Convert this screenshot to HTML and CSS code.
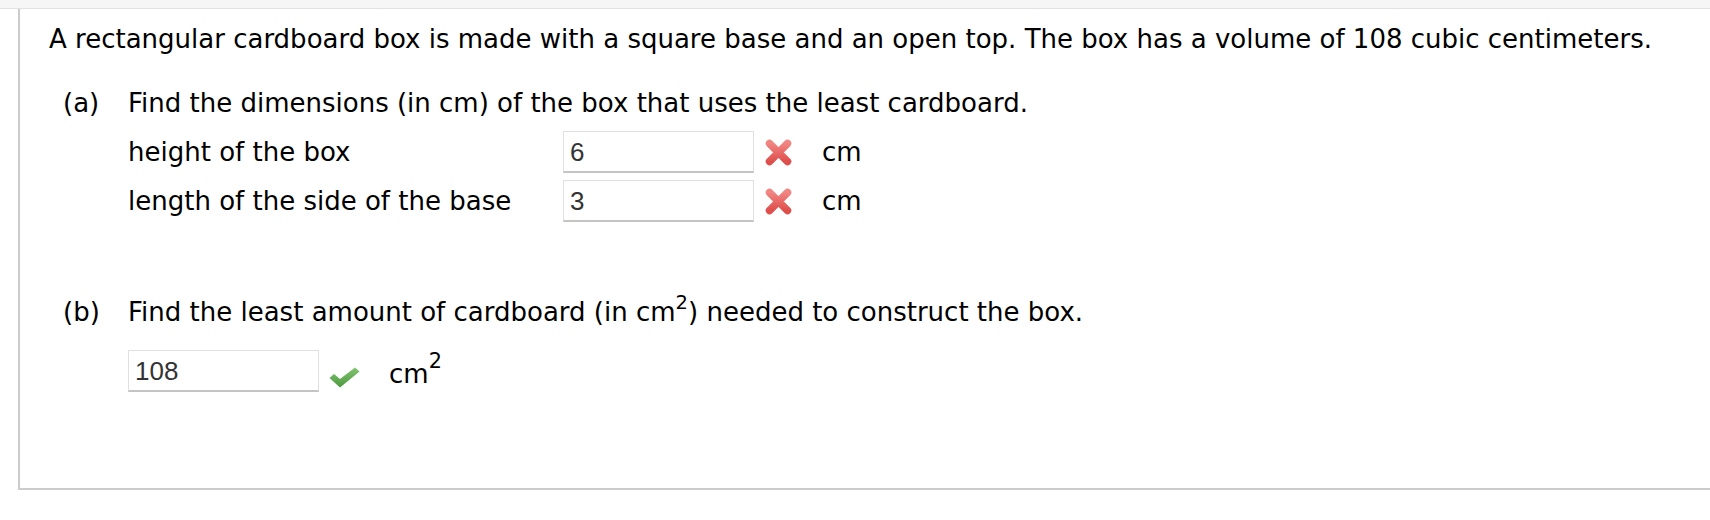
FILE: index.html
```html
<!DOCTYPE html>
<html>
<head>
<meta charset="utf-8">
<link rel="stylesheet" href="styles.css">
</head>
<body>
<div class="topband"></div>
<div class="frame">
  <p class="intro">A rectangular cardboard box is made with a square base and an open top. The box has a volume of 108 cubic centimeters.</p>

  <div class="part part-a">
    <div class="part-label">(a)</div>
    <div class="part-body">
      <div class="question">Find the dimensions (in cm) of the box that uses the least cardboard.</div>
      <div class="answers">
        <div class="answer-row">
          <div class="field-label">height of the box</div>
          <div class="input">6</div>
          <svg class="mark cross" viewBox="0 0 27 27" width="27" height="27">
            <defs>
              <linearGradient id="xg" x1="0" y1="0" x2="0" y2="1">
                <stop offset="0" stop-color="#f08582"/>
                <stop offset="1" stop-color="#de4f4c"/>
              </linearGradient>
            </defs>
            <path d="M4.5 4.5 L22.5 22.5 M22.5 4.5 L4.5 22.5" stroke="url(#xg)" stroke-width="7.5" stroke-linecap="round"/>
          </svg>
          <div class="unit">cm</div>
        </div>
        <div class="answer-row">
          <div class="field-label">length of the side of the base</div>
          <div class="input">3</div>
          <svg class="mark cross" viewBox="0 0 27 27" width="27" height="27">
            <path d="M4.5 4.5 L22.5 22.5 M22.5 4.5 L4.5 22.5" stroke="url(#xg)" stroke-width="7.5" stroke-linecap="round"/>
          </svg>
          <div class="unit">cm</div>
        </div>
      </div>
    </div>
  </div>

  <div class="part part-b">
    <div class="part-label">(b)</div>
    <div class="part-body">
      <div class="question">Find the least amount of cardboard (in cm<sup>2</sup>) needed to construct the box.</div>
      <div class="answers">
        <div class="answer-row">
          <div class="input">108</div>
          <svg class="mark check" viewBox="0 0 31 21" width="31" height="21">
            <defs>
              <linearGradient id="cg" x1="0" y1="0" x2="0" y2="1">
                <stop offset="0" stop-color="#80c670"/>
                <stop offset="1" stop-color="#4c983d"/>
              </linearGradient>
            </defs>
            <path d="M0.5 11 L5 7 L11 12 L26 0.5 L30.5 4.5 L11 20.5 Z" fill="url(#cg)"/>
          </svg>
          <div class="unit unit-sq">cm<sup>2</sup></div>
        </div>
      </div>
    </div>
  </div>
</div>
</body>
</html>
```
FILE: styles.css
```css
html, body {
  margin: 0;
  padding: 0;
  background: #ffffff;
}

body {
  font-family: "DejaVu Sans", Verdana, sans-serif;
  font-size: 26px;
  color: #000;
  overflow: hidden;
}

.topband {
  height: 8px;
  background: #f6f6f6;
  border-bottom: 1px solid #e2e2e2;
}

.frame {
  margin-left: 18px;
  border-left: 2px solid #cccccc;
  border-bottom: 2px solid #cccccc;
  height: 481px;
  box-sizing: border-box;
  padding: 12px 0 0 29px;
}

.intro {
  margin: 0;
  line-height: 36px;
  white-space: nowrap;
}

.part {
  display: flex;
  margin-left: 14px;
}

.part-a {
  margin-top: 28px;
}

.part-b {
  margin-top: 72px;
}

.part-label {
  width: 65px;
  flex: none;
  line-height: 36px;
}

.question {
  line-height: 36px;
  white-space: nowrap;
}

.question sup {
  font-size: 0.75em;
  line-height: 0;
  vertical-align: 0.62em;
}

.unit sup {
  font-size: 0.8em;
  line-height: 0;
  vertical-align: 0.7em;
}

.answers {
  display: flex;
  flex-direction: column;
  gap: 7px;
  margin-top: 10px;
}

.part-b .answers {
  margin-top: 20px;
}

.answer-row {
  display: flex;
  align-items: center;
}

.field-label {
  width: 435px;
  flex: none;
}

.input {
  width: 191px;
  height: 42px;
  box-sizing: border-box;
  border: 1px solid #e0e0e0;
  border-bottom: 2px solid #c4c4c4;
  padding: 0 6px;
  font-family: "Liberation Sans", Arial, sans-serif;
  font-size: 26px;
  line-height: 41px;
  color: #333;
  background: #fff;
}

.mark {
  display: block;
  flex: none;
}

.cross {
  margin-left: 11px;
}

.check {
  margin-left: 10px;
  margin-top: 12px;
}

.unit {
  margin-left: 30px;
}

.unit-sq {
  margin-left: 29px;
  margin-top: 6px;
}
```
